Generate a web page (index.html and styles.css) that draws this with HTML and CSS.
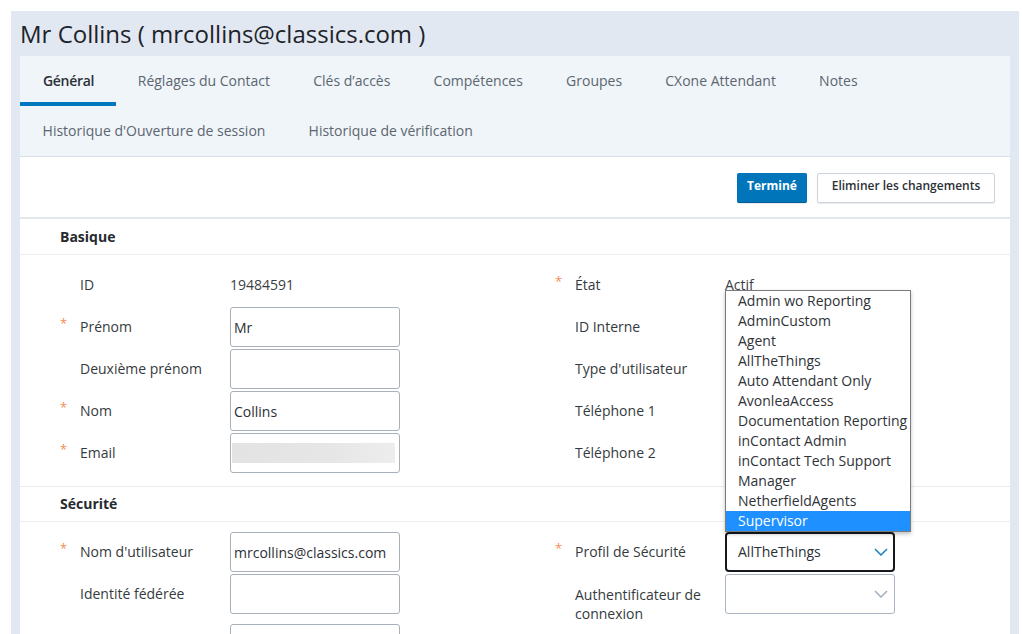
FILE: index.html
```html
<!DOCTYPE html>
<html lang="fr">
<head>
    <meta charset="UTF-8">
    <meta name="viewport" content="width=device-width, initial-scale=1.0">
    <title>Mr Collins - Utilisateur</title>
    <link rel="stylesheet" href="styles.css">
</head>
<body>
    <div class="panel">
        <h1 class="page-title">Mr Collins ( mrcollins@classics.com )</h1>

        <div class="card">
            <nav class="tabs">
                <a class="tab active">Général</a>
                <a class="tab">Réglages du Contact</a>
                <a class="tab">Clés d’accès</a>
                <a class="tab">Compétences</a>
                <a class="tab">Groupes</a>
                <a class="tab">CXone Attendant</a>
                <a class="tab">Notes</a>
                <a class="tab">Historique d'Ouverture de session</a>
                <a class="tab">Historique de vérification</a>
            </nav>

            <div class="toolbar">
                <button class="btn btn-primary">Terminé</button>
                <button class="btn">Eliminer les changements</button>
            </div>

            <!-- Basique -->
            <section class="section">
                <h2 class="section-title">Basique</h2>
                <div class="fields">
                    <div class="field">
                        <span class="req"></span>
                        <label>ID</label>
                        <span class="value">19484591</span>
                    </div>
                    <div class="field">
                        <span class="req">*</span>
                        <label>État</label>
                        <span class="value">Actif</span>
                    </div>

                    <div class="field">
                        <span class="req">*</span>
                        <label>Prénom</label>
                        <input class="input" type="text" value="Mr">
                    </div>
                    <div class="field">
                        <span class="req"></span>
                        <label>ID Interne</label>
                        <input class="input" type="text">
                    </div>

                    <div class="field">
                        <span class="req"></span>
                        <label>Deuxième prénom</label>
                        <input class="input" type="text">
                    </div>
                    <div class="field">
                        <span class="req"></span>
                        <label>Type d'utilisateur</label>
                        <div class="select"><span></span></div>
                    </div>

                    <div class="field">
                        <span class="req">*</span>
                        <label>Nom</label>
                        <input class="input" type="text" value="Collins">
                    </div>
                    <div class="field">
                        <span class="req"></span>
                        <label>Téléphone 1</label>
                        <input class="input" type="text">
                    </div>

                    <div class="field">
                        <span class="req">*</span>
                        <label>Email</label>
                        <div class="input masked"><span class="masked-bar"></span></div>
                    </div>
                    <div class="field">
                        <span class="req"></span>
                        <label>Téléphone 2</label>
                        <input class="input" type="text">
                    </div>
                </div>
            </section>

            <!-- Sécurité -->
            <section class="section">
                <h2 class="section-title">Sécurité</h2>
                <div class="fields">
                    <div class="field">
                        <span class="req">*</span>
                        <label>Nom d'utilisateur</label>
                        <input class="input" type="text" value="mrcollins@classics.com">
                    </div>
                    <div class="field">
                        <span class="req">*</span>
                        <label>Profil de Sécurité</label>
                        <div class="select-wrap">
                            <ul class="options">
                                <li>Admin wo Reporting</li>
                                <li>AdminCustom</li>
                                <li>Agent</li>
                                <li>AllTheThings</li>
                                <li>Auto Attendant Only</li>
                                <li>AvonleaAccess</li>
                                <li>Documentation Reporting</li>
                                <li>inContact Admin</li>
                                <li>inContact Tech Support</li>
                                <li>Manager</li>
                                <li>NetherfieldAgents</li>
                                <li class="hover">Supervisor</li>
                            </ul>
                            <div class="select focused">
                                <span>AllTheThings</span>
                                <svg class="chevron" width="14" height="8" viewBox="0 0 14 8"><polyline points="1,1 7,7 13,1" fill="none" stroke="#1b7fc4" stroke-width="1.5"/></svg>
                            </div>
                        </div>
                    </div>

                    <div class="field">
                        <span class="req"></span>
                        <label>Identité fédérée</label>
                        <input class="input" type="text">
                    </div>
                    <div class="field">
                        <span class="req"></span>
                        <label class="two-line">Authentificateur de connexion</label>
                        <div class="select">
                            <span></span>
                            <svg class="chevron" width="14" height="8" viewBox="0 0 14 8"><polyline points="1,1 7,7 13,1" fill="none" stroke="#a3afbc" stroke-width="1.5"/></svg>
                        </div>
                    </div>

                    <div class="field">
                        <span class="req"></span>
                        <label></label>
                        <input class="input" type="text">
                    </div>
                </div>
            </section>
        </div>
    </div>
</body>
</html>
```

FILE: styles.css
```css
body {
    margin: 0;
    background: #fff;
    font-family: "Open Sans", "Noto Sans", sans-serif;
    font-size: 14px;
    color: #333;
}

.panel {
    margin: 11px 3px 0 11px;
    padding: 0 9px;
    background: #e1e8f1;
    height: 623px;
    overflow: hidden;
}

.page-title {
    margin: 0;
    height: 45px;
    line-height: 45px;
    font-size: 24px;
    font-weight: 400;
    color: #1e232a;
}

.card {
    background: #fff;
}

/* tabs */
.tabs {
    display: flex;
    flex-wrap: wrap;
    padding-left: 1px;
    background: #f0f5f9;
    border-bottom: 1px solid #d8dfe7;
}
.tab {
    padding: 0 21.6px;
    height: 50px;
    line-height: 50px;
    color: #5c6670;
    cursor: pointer;
}
.tab.active {
    margin-left: -1px;
    padding-left: 23px;
    padding-right: 22px;
    color: #2b3036;
    font-weight: 600;
    letter-spacing: -0.3px;
    box-shadow: inset 0 -4px 0 #0077be;
}

/* toolbar */
.toolbar {
    display: flex;
    justify-content: flex-end;
    gap: 10px;
    padding: 16px 15px 14px;
}
.btn {
    height: 30px;
    padding: 0 13px 5px;
    font-family: inherit;
    font-size: 12px;
    font-weight: 600;
    color: #2b3036;
    background: #fff;
    border: 1px solid #cbd3dc;
    border-radius: 2px;
    box-shadow: 0 1px 1px rgba(0, 0, 0, 0.08);
    cursor: pointer;
}
.btn:last-child {
    width: 178px;
}
.btn-primary {
    width: 70px;
    padding: 0 0 6px;
    color: #fff;
    font-weight: 700;
    background: #0075ba;
    border-color: #0075ba;
    border-bottom-color: #005c94;
}

/* sections */
.section {
    border-top: 2px solid #e2e7ec;
}
.section + .section {
    border-top: 1px solid #e9ecef;
}
.section-title {
    margin: 0;
    padding-left: 40px;
    height: 35px;
    line-height: 36px;
    font-size: 14px;
    font-weight: 700;
    color: #262a2f;
    border-bottom: 1px solid #eceff2;
}
.section + .section .section-title {
    height: 34px;
    line-height: 34px;
}

.fields {
    display: grid;
    grid-template-columns: 340px 340px;
    column-gap: 155px;
    padding: 9px 0 12px 40px;
}

.field {
    display: grid;
    grid-template-columns: 20px 150px 170px;
    min-height: 42px;
}
.req {
    color: #f58b55;
    font-size: 13px;
    line-height: 20px;
    padding-top: 7px;
}
.field label {
    padding-top: 11px;
    line-height: 20px;
    color: #353a40;
}
.field label.two-line {
    padding-top: 11.5px;
    line-height: 19px;
}
.value {
    padding-top: 11px;
    line-height: 20px;
    color: #3b3f44;
}

.input {
    box-sizing: border-box;
    width: 170px;
    height: 40px;
    margin: 1px 0;
    padding: 0 3px;
    font-family: inherit;
    font-size: 14px;
    color: #2b3036;
    border: 1px solid #a8b0b9;
    border-radius: 3px;
    background: #fff;
}
.masked {
    display: flex;
    align-items: center;
    padding: 0 4px 0 1px;
}
.masked-bar {
    display: block;
    width: 163px;
    height: 20px;
    background: linear-gradient(90deg, #e3e3e3, #e6e6e6 60%, #ededed);
}

/* selects */
.select-wrap {
    position: relative;
}
.select {
    box-sizing: border-box;
    position: relative;
    width: 170px;
    height: 40px;
    margin: 1px 0;
    padding: 0 12px;
    line-height: 38px;
    color: #2b3036;
    border: 1px solid #a9b5c3;
    border-radius: 3px;
    background: #fff;
}
.select.focused {
    border: 2px solid #15181c;
    border-radius: 4px;
    line-height: 36px;
    padding-left: 11px;
}
.chevron {
    position: absolute;
    right: 6px;
    top: 15px;
}
.select.focused .chevron {
    right: 5px;
    top: 14px;
}

/* open option list above the security profile */
.options {
    box-sizing: border-box;
    position: absolute;
    left: 0;
    bottom: calc(100% - 1px);
    width: 186px;
    margin: 0;
    padding: 0;
    list-style: none;
    background: #fff;
    border: 1px solid #7b7b7b;
    box-shadow: 0 2px 4px rgba(0, 0, 0, 0.25);
    z-index: 2;
}
.options li {
    height: 20px;
    line-height: 20px;
    padding-left: 12px;
    white-space: nowrap;
    color: #2f3338;
}
.options li.hover {
    background: #1e90ff;
    color: #fff;
}
```
